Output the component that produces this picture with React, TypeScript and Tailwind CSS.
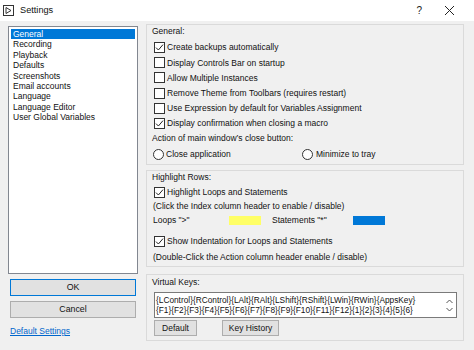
import React from 'react';

const PAGES = [
  'General',
  'Recording',
  'Playback',
  'Defaults',
  'Screenshots',
  'Email accounts',
  'Language',
  'Language Editor',
  'User Global Variables',
];

const GENERAL_OPTIONS = [
  { label: 'Create backups automatically', checked: true },
  { label: 'Display Controls Bar on startup', checked: false },
  { label: 'Allow Multiple Instances', checked: false },
  { label: 'Remove Theme from Toolbars (requires restart)', checked: false },
  { label: 'Use Expression by default for Variables Assignment', checked: false },
  { label: 'Display confirmation when closing a macro', checked: true },
];

function CheckBox({ checked }: { checked: boolean }) {
  return (
    <span className="flex items-center justify-center w-[11px] h-[11px] border border-[#333] bg-white shrink-0">
      {checked && (
        <svg width="9" height="9" viewBox="0 0 9 9">
          <path d="M1 4.6 L3.4 7 L8 1.6" fill="none" stroke="#222" strokeWidth="1" />
        </svg>
      )}
    </span>
  );
}

function Radio() {
  return <span className="w-[11px] h-[11px] rounded-full border border-[#333] bg-white shrink-0" />;
}

function CheckRow({ label, checked, className = 'h-[15.2px]' }: { label: string; checked: boolean; className?: string }) {
  return (
    <div className={`flex items-center gap-[2px] pl-[7px] ${className}`}>
      <CheckBox checked={checked} />
      <span className="whitespace-nowrap">{label}</span>
    </div>
  );
}

export default function App() {
  return (
    <div
      className="w-[474px] h-[350px] overflow-hidden bg-[#f0f0f0] text-[#111] text-[8.5px] leading-none"
      style={{ fontFamily: '"Liberation Sans", Arial, sans-serif' }}
    >
      {/* Title bar */}
      <div className="h-[21px] bg-white flex items-center">
        <svg width="11" height="11" viewBox="0 0 11 11" className="ml-[3px]">
          <rect x="0.5" y="0.5" width="10" height="10" fill="none" stroke="#333" />
          <path d="M3 2.5 L8 5.5 L3 8.5 Z" fill="none" stroke="#333" />
        </svg>
        <span className="ml-[6px] text-[9.2px]">Settings</span>
        <span className="ml-auto mr-[22px] text-[10px] text-[#222]">?</span>
        <svg width="11" height="11" viewBox="0 0 11 11" className="mr-[19px]">
          <path d="M1 1 L10 10 M10 1 L1 10" stroke="#222" strokeWidth="1" />
        </svg>
      </div>

      <div className="flex pl-[8px] pt-[3px]">
        {/* Left column */}
        <div className="w-[130px] flex flex-col">
          <div className="h-[248px] mt-[2px] border border-[#828790] bg-white p-[2px]">
            {PAGES.map((p, i) => (
              <div
                key={p}
                className={`h-[10.4px] leading-[10.4px] pl-[2px] ${i === 0 ? 'bg-[#0078d7] text-white' : ''}`}
              >
                {p}
              </div>
            ))}
          </div>
          <div className="mt-[5px] mx-[2px] h-[17px] flex items-center justify-center border border-[#0078d7] bg-[#e1e1e1]">
            <span className="text-[8.8px]">OK</span>
          </div>
          <div className="mt-[5px] mx-[2px] h-[17px] flex items-center justify-center border border-[#adadad] bg-[#e1e1e1]">
            <span className="text-[8.8px]">Cancel</span>
          </div>
          <span className="mt-[9px] ml-[2px] text-[#0066cc] underline">Default Settings</span>
        </div>

        {/* Right column */}
        <div className="w-[318px] ml-[8px] flex flex-col">
          {/* General */}
          <div className="h-[141px] border border-[#dadada] pt-[1px]">
            <div className="h-[11px] leading-[11px] pl-[5px]">General:</div>
            <div className="h-[3px]" />
            {GENERAL_OPTIONS.map((o) => (
              <CheckRow key={o.label} label={o.label} checked={o.checked} />
            ))}
            <div className="h-[14px] flex items-center pl-[5px]">Action of main window’s close button:</div>
            <div className="mt-[2px] h-[15px] flex items-center pl-[6px]">
              <div className="w-[149px] flex items-center gap-[2px]">
                <Radio />
                <span>Close application</span>
              </div>
              <div className="flex items-center gap-[3px]">
                <Radio />
                <span>Minimize to tray</span>
              </div>
            </div>
          </div>

          {/* Highlight Rows */}
          <div className="h-[97px] mt-[5px] border border-[#dadada] pt-[1px]">
            <div className="h-[10px] leading-[10px] pl-[5px]">Highlight Rows:</div>
            <div className="h-[3px]" />
            <CheckRow label="Highlight Loops and Statements" checked className="h-[15px]" />
            <div className="h-[13px] flex items-center pl-[6px]">(Click the Index column header to enable / disable)</div>
            <div className="h-[15px] flex items-center pl-[6px]">
              <span className="w-[76px]">Loops "&gt;"</span>
              <span className="w-[32px] h-[9px] bg-[#ffff66]" />
              <span className="ml-[11px] w-[81px]">Statements "*"</span>
              <span className="w-[32px] h-[9px] bg-[#0078d7]" />
            </div>
            <div className="h-[6px]" />
            <CheckRow label="Show Indentation for Loops and Statements" checked className="h-[15px]" />
            <div className="h-[16px] flex items-center pl-[6px]">
              (Double-Click the Action column header enable / disable)
            </div>
          </div>

          {/* Virtual Keys */}
          <div className="h-[67px] mt-[7px] border border-[#dadada] pt-[1px]">
            <div className="h-[12px] leading-[12px] pl-[5px]">Virtual Keys:</div>
            <div className="mt-[4px] ml-[7px] mr-[6px] h-[26px] border border-[#7a7a7a] bg-white flex">
              <div className="flex-1 flex flex-col justify-center pl-[1px] text-[8.3px] leading-[10.5px] whitespace-nowrap overflow-hidden">
                <span>{'{LControl}{RControl}{LAlt}{RAlt}{LShift}{RShift}{LWin}{RWin}{AppsKey}'}</span>
                <span>{'{F1}{F2}{F3}{F4}{F5}{F6}{F7}{F8}{F9}{F10}{F11}{F12}{1}{2}{3}{4}{5}{6}'}</span>
              </div>
              <div className="w-[14px] flex flex-col items-center justify-center gap-[3px]">
                <svg width="7" height="5" viewBox="0 0 7 5">
                  <path d="M0.5 4 L3.5 1 L6.5 4" fill="none" stroke="#555" />
                </svg>
                <svg width="7" height="5" viewBox="0 0 7 5">
                  <path d="M0.5 1 L3.5 4 L6.5 1" fill="none" stroke="#555" />
                </svg>
              </div>
            </div>
            <div className="mt-[2px] ml-[7px] flex gap-[25px]">
              <div className="w-[43px] h-[16px] flex items-center justify-center border border-[#adadad] bg-[#e1e1e1]">
                Default
              </div>
              <div className="w-[57px] h-[16px] flex items-center justify-center border border-[#adadad] bg-[#e1e1e1]">
                Key History
              </div>
            </div>
          </div>
        </div>
      </div>
    </div>
  );
}
